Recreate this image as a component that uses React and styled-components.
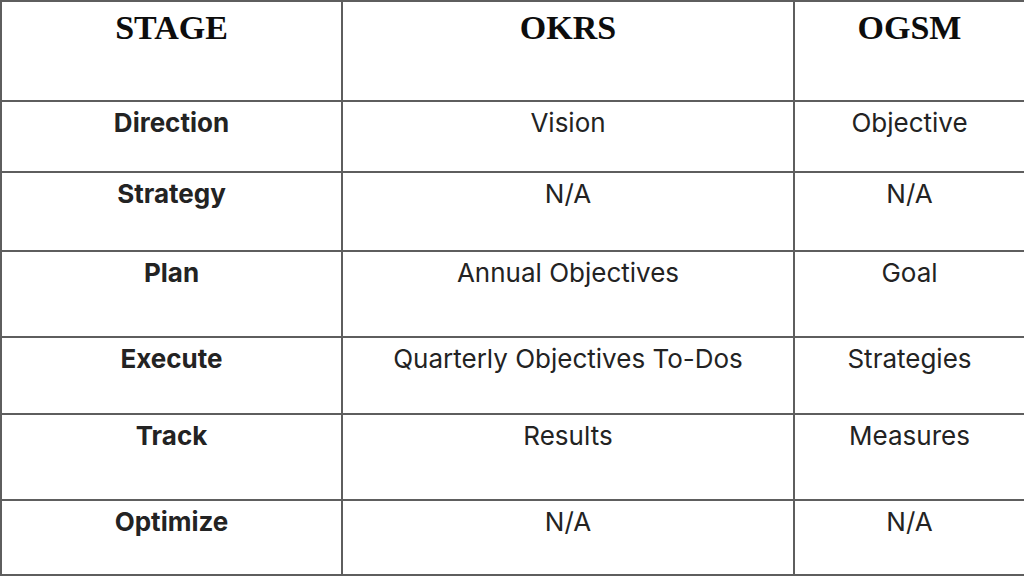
import styled, { createGlobalStyle } from "styled-components";

const GlobalStyle = createGlobalStyle`
  html, body {
    margin: 0;
    padding: 0;
    background: #fff;
  }
`;

const rows = [
  { stage: "Direction", okrs: "Vision", ogsm: "Objective", height: 71 },
  { stage: "Strategy", okrs: "N/A", ogsm: "N/A", height: 79 },
  { stage: "Plan", okrs: "Annual Objectives", ogsm: "Goal", height: 86 },
  { stage: "Execute", okrs: "Quarterly Objectives To-Dos", ogsm: "Strategies", height: 77 },
  { stage: "Track", okrs: "Results", ogsm: "Measures", height: 86 },
  { stage: "Optimize", okrs: "N/A", ogsm: "N/A", height: 76 }
];

export default function App() {
  return (
    <>
      <GlobalStyle />
      <Table>
        <Row $height={100}>
          <HeadCell>STAGE</HeadCell>
          <HeadCell>OKRS</HeadCell>
          <HeadCell>OGSM</HeadCell>
        </Row>
        {rows.map((r) => (
          <Row key={r.stage} $height={r.height}>
            <Cell $bold>{r.stage}</Cell>
            <Cell>{r.okrs}</Cell>
            <Cell>{r.ogsm}</Cell>
          </Row>
        ))}
      </Table>
    </>
  );
}

const Table = styled.div`
  width: 1024px;
  height: 576px;
  display: flex;
  flex-direction: column;
  background: #fff;
  border-bottom: 2px solid #5e5e5e;
  box-sizing: border-box;
`;

const Row = styled.div`
  display: grid;
  grid-template-columns: 341px 452px 1fr;
  height: ${(p) => p.$height}px;
  flex-shrink: 0;
`;

const BaseCell = styled.div`
  box-sizing: border-box;
  border-top: 2px solid #5e5e5e;
  border-left: 2px solid #5e5e5e;
  text-align: center;
`;

const HeadCell = styled(BaseCell)`
  padding-top: 7px;
  font-family: "Liberation Serif", "Times New Roman", serif;
  font-weight: 700;
  font-size: 34px;
  line-height: 38px;
  color: #0d0d0d;
`;

const Cell = styled(BaseCell)`
  padding-top: 5px;
  font-family: Inter, "Liberation Sans", sans-serif;
  font-weight: ${(p) => (p.$bold ? 700 : 400)};
  font-size: 26px;
  line-height: 31px;
  color: #232323;
`;
